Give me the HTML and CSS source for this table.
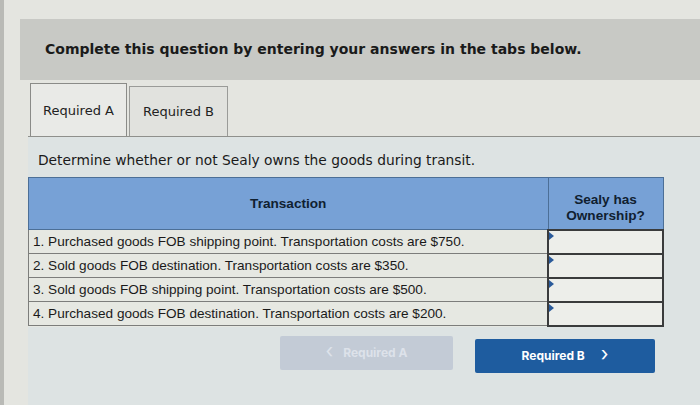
FILE: index.html
```html
<!DOCTYPE html>
<html>
<head>
<meta charset="utf-8">
<link rel="stylesheet" href="styles.css">
</head>
<body>
<div class="page">
  <div class="banner">Complete this question by entering your answers in the tabs below.</div>
  <div class="tabs">
    <div class="tab active">Required A</div>
    <div class="tab">Required B</div>
  </div>
  <div class="panel">
    <p class="prompt">Determine whether or not Sealy owns the goods during transit.</p>
    <table class="grid">
      <thead>
        <tr><th class="c-tx">Transaction</th><th class="c-own">Sealy has<br>Ownership?</th></tr>
      </thead>
      <tbody>
        <tr><td>1. Purchased goods FOB shipping point. Transportation costs are $750.</td><td class="inp"><span class="mark"></span></td></tr>
        <tr><td>2. Sold goods FOB destination. Transportation costs are $350.</td><td class="inp"><span class="mark"></span></td></tr>
        <tr><td>3. Sold goods FOB shipping point. Transportation costs are $500.</td><td class="inp"><span class="mark"></span></td></tr>
        <tr><td>4. Purchased goods FOB destination. Transportation costs are $200.</td><td class="inp"><span class="mark"></span></td></tr>
      </tbody>
    </table>
    <div class="nav">
      <button class="btn prev" disabled><span class="chev">&lsaquo;</span>Required A</button>
      <button class="btn next">Required B<span class="chev">&rsaquo;</span></button>
    </div>
  </div>
</div>
</body>
</html>
```

FILE: styles.css
```css
html, body { margin: 0; padding: 0; }
body {
  width: 700px;
  height: 405px;
  overflow: hidden;
  background: #e4e5e0;
  font-family: "DejaVu Sans", Verdana, sans-serif;
  color: #1a1a1a;
}
.page {
  padding-top: 19px;
  box-sizing: border-box;
  height: 405px;
  border-left: 4px solid #b9bab6;
}
.banner {
  margin-left: 16px;
  height: 61px;
  background: #c8c9c5;
  font-weight: bold;
  font-size: 14px;
  display: flex;
  align-items: center;
  padding-left: 25px;
  padding-bottom: 2px;
  box-sizing: border-box;
}
.tabs {
  display: flex;
  gap: 2px;
  margin-left: 26px;
  margin-top: 3px;
  height: 53px;
  align-items: flex-end;
}
.tab {
  box-sizing: border-box;
  height: 50px;
  width: 99px;
  border: 1px solid #9a9b98;
  border-bottom: none;
  background: #e1e2de;
  font-size: 13px;
  display: flex;
  align-items: center;
  justify-content: center;
  color: #222;
}
.tab.active {
  height: 53px;
  width: 97px;
  background: #e9eae7;
  border-color: #8a8b88;
}
.panel {
  margin-left: 24px;
  border-top: 1px solid #8f908c;
  background: #dde3e3;
  height: 270px;
}
.prompt {
  margin: 0;
  padding: 15px 0 0 10px;
  font-size: 13.8px;
  height: 40px;
  box-sizing: border-box;
}
.grid {
  border-collapse: collapse;
  width: 636px;
  font-family: "Liberation Sans", Arial, sans-serif;
  font-size: 13.6px;
  background: #e6e8e2;
}
.grid th {
  background: #77a1d6;
  font-weight: bold;
  color: #102030;
  border: 1px solid #4c6f97;
  height: 52px;
  box-sizing: border-box;
  padding: 0;
  font-size: 13.6px;
}
.grid th.c-own { width: 115px; line-height: 16px; vertical-align: top; padding-top: 14px; }
.grid td {
  border: 1px solid #7c7d7b;
  height: 24px;
  padding: 0 0 0 4px;
  box-sizing: border-box;
  white-space: nowrap;
}
.grid td.inp {
  position: relative;
  background: #edeeea;
  border: 2px solid #3a3b3c;
  padding: 0;
}
.mark {
  position: absolute;
  left: 0;
  top: 1px;
  width: 0;
  height: 0;
  border-top: 4px solid transparent;
  border-bottom: 4px solid transparent;
  border-left: 5px solid #2a5a9a;
}
.nav {
  display: flex;
  gap: 22px;
  margin-top: 9px;
  margin-left: 252px;
}
.btn {
  font-family: Inter, "Liberation Sans", sans-serif;
  font-size: 12px;
  font-weight: bold;
  height: 34px;
  border: none;
  border-radius: 2px;
  display: flex;
  align-items: center;
  justify-content: center;
  gap: 10px;
  padding: 0;
}
.btn.prev {
  width: 173px;
  background: #c3cbd6;
  color: #dde2ea;
}
.btn.next {
  width: 180px;
  background: #1e5c9f;
  color: #ffffff;
  margin-top: 3px;
}
.chev { font-size: 20px; font-weight: normal; line-height: 1; margin-top: -3px; }
.btn.next .chev { margin-left: 6px; }
```
